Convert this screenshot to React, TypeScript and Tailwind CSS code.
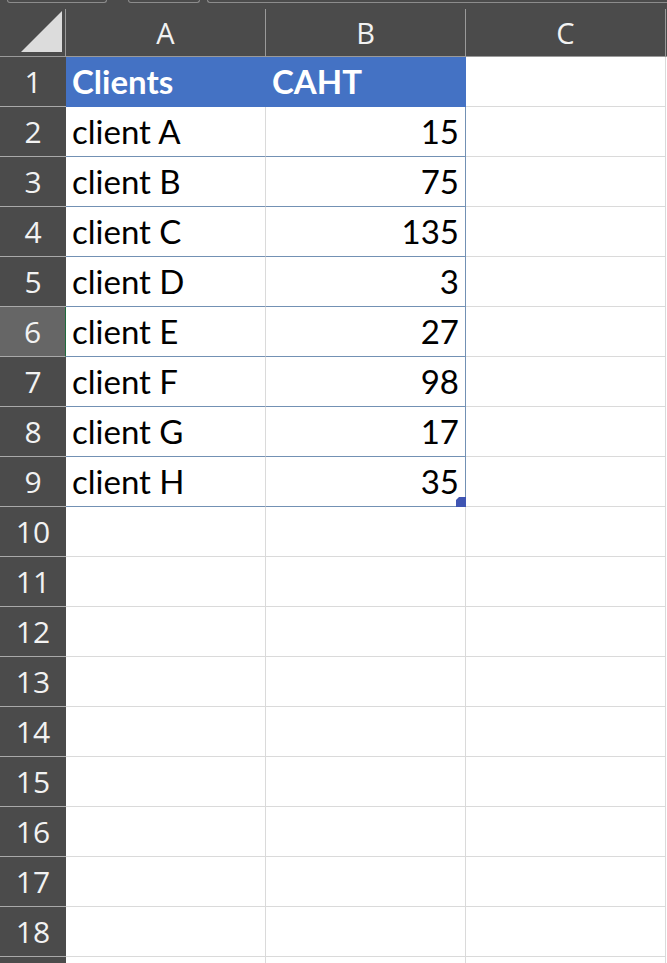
import React from "react";

const rows: [string, string][] = [
  ["client A", "15"],
  ["client B", "75"],
  ["client C", "135"],
  ["client D", "3"],
  ["client E", "27"],
  ["client F", "98"],
  ["client G", "17"],
  ["client H", "35"],
];

const headFont = { fontFamily: '"Open Sans", "Noto Sans", sans-serif' };
const cellFont = { fontFamily: 'Lato, "Open Sans", sans-serif' };

function RowHead({ n, active }: { n?: number; active?: boolean }) {
  return (
    <div
      className={
        "w-[66px] h-full flex items-center justify-center text-[30px] text-[#f2f2f2] border-b border-[#a9a9a9] " +
        (active ? "bg-[#666666] border-r border-r-[#1e6b3c]" : "bg-[#4b4b4b]")
      }
      style={headFont}
    >
      {n !== undefined && <span className="leading-none pt-[1px]">{n}</span>}
    </div>
  );
}

export default function App() {
  return (
    <div className="w-[667px] h-[963px] overflow-hidden bg-white">
      {/* top strip */}
      <div className="h-[9px] bg-[#4b4b4b] flex">
        <div className="w-[7px]" />
        <div className="w-[100px] h-[3px] border-b border-x border-[#8c8c8c] rounded-b-[4px]" />
        <div className="w-[21px]" />
        <div className="w-[72px] h-[3px] border-b border-x border-[#8c8c8c] rounded-b-[4px]" />
        <div className="w-[7px]" />
        <div className="flex-1 h-[3px] border-b border-l border-[#8c8c8c] rounded-bl-[4px]" />
      </div>
      {/* column header */}
      <div className="h-[48px] bg-[#4b4b4b] flex border-b border-[#9a9a9a]">
        <div className="w-[66px] h-full border-r border-[#9a9a9a] flex items-end justify-end pr-[2px] pb-[3px]">
          <svg width="42" height="42" viewBox="0 0 42 42">
            <polygon points="41,0 41,41 0,41" fill="#dcdcdc" />
          </svg>
        </div>
        {["A", "B", "C"].map((c) => (
          <div
            key={c}
            className="w-[200px] h-full border-r border-[#9a9a9a] flex items-center justify-center text-[29px] text-[#f2f2f2]"
            style={headFont}
          >
            <span className="leading-none pb-[1px]">{c}</span>
          </div>
        ))}
        <div className="flex-1" />
      </div>
      {/* row 1 */}
      <div className="h-[50px] flex">
        <RowHead n={1} />
        <div className="w-[400px] h-full bg-[#4472c4] flex text-white font-bold text-[33px]" style={cellFont}>
          <div className="w-[200px] flex items-center pl-[6px]">Clients</div>
          <div className="w-[200px] flex items-center pl-[6px]">CAHT</div>
        </div>
        <div className="w-[200px] h-full border-r border-b border-[#dadada]" />
      </div>
      {rows.map(([name, val], i) => {
        const last = i === rows.length - 1;
        return (
          <div key={name} className="h-[50px] flex">
            <RowHead n={i + 2} active={i + 2 === 6} />
            <div
              className="w-[200px] h-full border-b border-r border-b-[#7391b4] border-r-[#dadada] flex items-center pl-[6px] text-[33px] text-black"
              style={cellFont}
            >
              {name}
            </div>
            <div
              className="relative w-[200px] h-full border-b border-r border-[#7391b4] flex items-center justify-end pr-[6px] text-[33px] text-black"
              style={cellFont}
            >
              {val}
              {last && (
                <svg className="absolute right-[-1px] bottom-[-1px]" width="10" height="10" viewBox="0 0 10 10">
                  <polygon points="3,0 10,0 10,10 0,10 0,3" fill="#3f55b3" />
                </svg>
              )}
            </div>
            <div className="w-[200px] h-full border-r border-b border-[#dadada]" />
          </div>
        );
      })}
      {Array.from({ length: 9 }, (_, k) => k + 10).map((n) => (
        <div key={n} className="h-[50px] flex">
          <RowHead n={n} />
          <div className="w-[200px] h-full border-r border-b border-[#dadada]" />
          <div className="w-[200px] h-full border-r border-b border-[#dadada]" />
          <div className="w-[200px] h-full border-r border-b border-[#dadada]" />
        </div>
      ))}
      <div className="h-[50px] flex">
        <RowHead />
        <div className="w-[200px] h-full border-r border-[#dadada]" />
        <div className="w-[200px] h-full border-r border-[#dadada]" />
        <div className="w-[200px] h-full border-r border-[#dadada]" />
      </div>
    </div>
  );
}
